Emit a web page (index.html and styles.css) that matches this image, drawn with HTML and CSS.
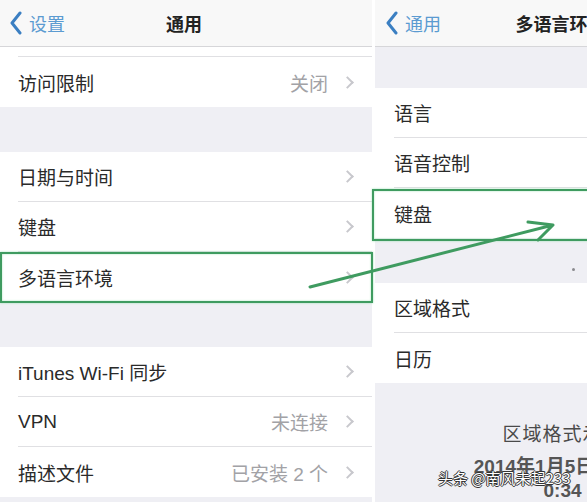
FILE: index.html
```html
<!DOCTYPE html>
<html lang="zh-CN">

<head>
    <meta charset="UTF-8">
    <meta name="viewport" content="width=device-width, initial-scale=1.0">
    <title>通用 / 多语言环境</title>
    <link rel="stylesheet" href="styles.css">
</head>

<body>

    <div class="screens">

        <section class="phone phone-left">
            <header class="nav">
                <span class="back">
                    <svg class="back-icon" viewBox="0 0 14 24" width="14" height="24">
                        <path d="M11 2 L3 12 L11 22" />
                    </svg>设置
                </span>
                <h1 class="title">通用</h1>
                <span></span>
            </header>

            <ul class="group">
                <li class="row stub"></li>
                <li class="row"><span class="label">访问限制</span><span class="value">关闭</span><i class="chev"></i></li>
            </ul>
            <div class="gap"></div>
            <ul class="group">
                <li class="row"><span class="label">日期与时间</span><i class="chev"></i></li>
                <li class="row"><span class="label">键盘</span><i class="chev"></i></li>
                <li class="row"><span class="label">多语言环境</span><i class="chev"></i></li>
            </ul>
            <div class="gap"></div>
            <ul class="group">
                <li class="row"><span class="label">iTunes Wi-Fi 同步</span><i class="chev"></i></li>
                <li class="row"><span class="label">VPN</span><span class="value">未连接</span><i class="chev"></i></li>
                <li class="row"><span class="label">描述文件</span><span class="value">已安装 2 个</span><i class="chev"></i></li>
            </ul>
            <div class="gap"></div>
        </section>

        <section class="phone phone-right">
            <header class="nav">
                <span class="back">
                    <svg class="back-icon" viewBox="0 0 14 24" width="14" height="24">
                        <path d="M11 2 L3 12 L11 22" />
                    </svg>通用
                </span>
                <h1 class="title">多语言环境</h1>
                <span></span>
            </header>

            <div class="gap gap-short"></div>
            <ul class="group">
                <li class="row"><span class="label">语言</span></li>
                <li class="row"><span class="label">语音控制</span></li>
                <li class="row"><span class="label">键盘</span></li>
            </ul>
            <div class="gap"><span class="dot"></span></div>
            <ul class="group">
                <li class="row"><span class="label">区域格式</span></li>
                <li class="row"><span class="label">日历</span></li>
            </ul>
            <div class="sample">
                <p class="sample-head">区域格式示例</p>
                <p class="sample-date">2014年1月5日星期日</p>
                <p class="sample-date">0:34</p>
            </div>
        </section>

        <!-- annotations drawn over the screenshots -->
        <div class="mark mark-left"></div>
        <div class="mark mark-right"></div>
        <svg class="arrow" viewBox="0 0 587 502" width="587" height="502">
            <path d="M310 287 L553 225 M528 222 L553 225 L538 240" />
        </svg>
        <div class="watermark">头条 @南风未起233</div>
    </div>

</body>

</html>
```

FILE: styles.css
```css
body {
    margin: 0;
    background: #fff;
    font-family: "Liberation Sans", "Noto Sans CJK SC", sans-serif;
    color: #2a2a2a;
}

ul {
    margin: 0;
    padding: 0;
    list-style-type: none;
}

p {
    margin: 0;
}

.screens {
    position: relative;
    display: flex;
    gap: 3px;
    width: 587px;
    height: 502px;
    overflow: hidden;
}

.phone {
    flex-shrink: 0;
    height: 502px;
    background: #efeff4;
    overflow: hidden;
}

.phone-left {
    width: 372px;
}

.phone-right {
    width: 375px;
}

.nav {
    display: grid;
    grid-template-columns: 1fr auto 1fr;
    align-items: center;
    height: 46px;
    background: #f8f8f8;
    border-bottom: 1px solid #d6d6d9;
}

.back {
    display: flex;
    align-items: center;
    gap: 6px;
    padding-left: 9px;
    font-size: 18px;
    color: #5b9bd1;
}

.phone-right .back {
    padding-left: 10px;
}

.back-icon path {
    fill: none;
    stroke: #3b7fc2;
    stroke-width: 3;
    stroke-linecap: round;
    stroke-linejoin: round;
}

.title {
    margin: 0 0 0 -4px;
    font-size: 18px;
    font-weight: bold;
    color: #222;
    white-space: nowrap;
}

.group {
    background: #fff;
}

.row {
    display: flex;
    align-items: center;
    box-sizing: border-box;
    height: 50px;
    margin-left: 18px;
    padding-right: 17px;
    border-bottom: 1px solid #e0e0e3;
    font-size: 19px;
}

.phone-right .row {
    margin-left: 19px;
}

.row:last-child {
    border-bottom: none;
}

.row.stub {
    height: 10px;
}

.label {
    flex: 1;
    white-space: nowrap;
}

.value {
    margin-right: 15px;
    color: #a2a2a6;
}

.chev {
    width: 7px;
    height: 7px;
    margin-right: 3px;
    border-top: 2px solid #c8c8cd;
    border-right: 2px solid #c8c8cd;
    transform: rotate(45deg);
}

.gap {
    position: relative;
    height: 45px;
}

.gap-short {
    height: 41px;
}

.dot {
    position: absolute;
    top: 30px;
    left: 197px;
    width: 3px;
    height: 3px;
    border-radius: 50%;
    background: #8a8a8e;
}

.sample {
    padding-top: 36px;
    text-align: center;
    color: #4a4a4a;
}

.sample-head {
    margin-bottom: 9px;
    font-size: 19px;
    letter-spacing: 1px;
}

.sample-date {
    font-size: 19px;
    line-height: 24px;
    font-weight: bold;
    color: #555;
}

.mark {
    position: absolute;
    box-sizing: border-box;
    border: 2px solid #3f9b60;
    box-shadow: 0 0 2px #9fe0b6, inset 0 0 2px #9fe0b6;
}

.mark-left {
    left: 0;
    top: 252px;
    width: 373px;
    height: 51px;
}

.mark-right {
    left: 372px;
    top: 189px;
    width: 230px;
    height: 52px;
}

.arrow {
    position: absolute;
    left: 0;
    top: 0;
    pointer-events: none;
}

.arrow path {
    fill: none;
    stroke: #3f9b60;
    stroke-width: 3;
    stroke-linecap: round;
    stroke-linejoin: round;
}

.watermark {
    position: absolute;
    left: 438px;
    top: 469px;
    font-family: "Noto Sans CJK SC", sans-serif;
    font-size: 15px;
    line-height: 18px;
    color: #fff;
    text-shadow: -1px 0 #333, 1px 0 #333, 0 -1px #333, 0 1px #333;
}
```
